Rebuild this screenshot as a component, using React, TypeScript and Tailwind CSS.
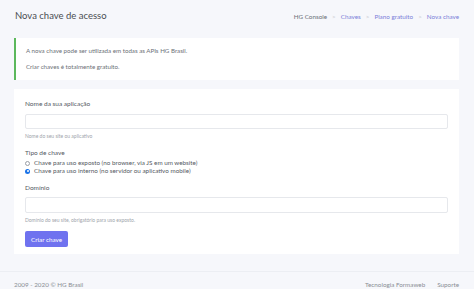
export default function App() {
  return (
    <div className="flex h-[289px] w-[474px] flex-col overflow-hidden bg-[#f6f7fb] font-['Lato','Nunito','Liberation_Sans',sans-serif] text-[#6b6f76]">
      <div className="flex h-[33px] items-center justify-between pl-[15px] pr-[15px]">
        <h1 className="text-[9.5px] text-[#4a4d52]">Nova chave de acesso</h1>
        <nav className="flex items-center gap-[5px] text-[6.3px]">
          <span className="text-[#6b6f76]">HG Console</span>
          <span className="text-[#c9cbd1]">&gt;</span>
          <span className="text-[#7b7fd9]">Chaves</span>
          <span className="text-[#c9cbd1]">&gt;</span>
          <span className="text-[#7b7fd9]">Plano gratuito</span>
          <span className="text-[#c9cbd1]">&gt;</span>
          <span className="text-[#7b7fd9]">Nova chave</span>
        </nav>
      </div>

      <div className="flex flex-col gap-[9px] pl-[14px] pr-[15px] pt-[5px]">
        <div className="flex h-[42px] flex-col justify-center gap-[6px] border-l-[2px] border-[#5cb85c] bg-white pl-[10px] text-[6.2px] leading-[10px] text-[#6b6f76]">
          <p>A nova chave pode ser utilizada em todas as APIs HG Brasil.</p>
          <p>Criar chaves é totalmente gratuito.</p>
        </div>

        <div className="flex h-[165px] flex-col bg-white px-[11px] pt-[10px]">
          <label className="text-[6.5px] text-[#55595f]">Nome da sua aplicação</label>
          <div className="mt-[5px] h-[15px] rounded-[2px] border border-[#e6e8ec] bg-white" />
          <p className="mt-[4px] text-[5px] text-[#a0a4ab]">Nome do seu site ou aplicativo</p>

          <label className="mt-[8px] text-[6.5px] text-[#55595f]">Tipo de chave</label>
          <div className="mt-[1px] flex items-center gap-[4px] text-[6.3px] leading-[8px] text-[#55595f]">
            <span className="h-[5px] w-[5px] rounded-full border border-[#9a9ea5] bg-white" />
            <span>Chave para uso exposto (no browser, via JS em um website)</span>
          </div>
          <div className="flex items-center gap-[4px] text-[6.3px] leading-[8px] text-[#55595f]">
            <span className="flex h-[5px] w-[5px] items-center justify-center rounded-full bg-[#1a73e8]">
              <span className="h-[2px] w-[2px] rounded-full bg-white" />
            </span>
            <span>Chave para uso interno (no servidor ou aplicativo mobile)</span>
          </div>

          <label className="mt-[8px] text-[6.5px] text-[#55595f]">Domínio</label>
          <div className="mt-[4px] h-[16px] rounded-[2px] border border-[#e6e8ec] bg-white" />
          <p className="mt-[4px] text-[5px] text-[#a0a4ab]">Domínio do seu site, obrigatório para uso exposto.</p>

          <button className="mt-[7px] h-[16px] w-[43px] rounded-[2px] bg-[#6f72ef] text-[6.3px] text-white">
            Criar chave
          </button>
        </div>
      </div>

      <div className="mt-auto flex h-[18px] items-start justify-between border-t border-[#eceef3] pl-[14px] pr-[15px] pt-[8px] text-[6.3px] text-[#8a8e95]">
        <span>2009 - 2020 © HG Brasil</span>
        <div className="flex gap-[12px]">
          <span>Tecnologia Formaweb</span>
          <span>Suporte</span>
        </div>
      </div>
    </div>
  );
}
